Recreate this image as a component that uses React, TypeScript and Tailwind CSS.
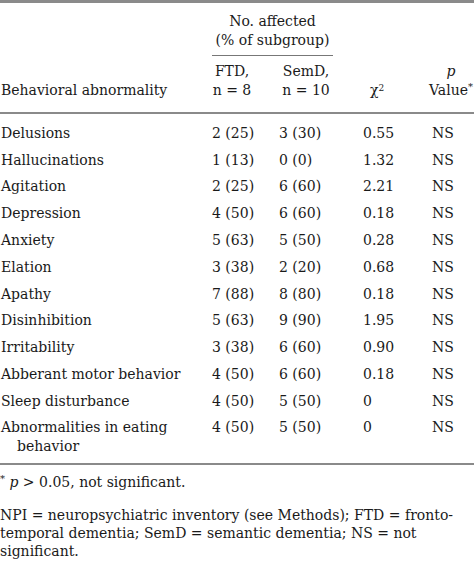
import * as React from "react";

type Row = { label: string; cont?: string; ftd: string; semd: string; chi: string; p: string };

const rows: Row[] = [
  { label: "Delusions", ftd: "2 (25)", semd: "3 (30)", chi: "0.55", p: "NS" },
  { label: "Hallucinations", ftd: "1 (13)", semd: "0 (0)", chi: "1.32", p: "NS" },
  { label: "Agitation", ftd: "2 (25)", semd: "6 (60)", chi: "2.21", p: "NS" },
  { label: "Depression", ftd: "4 (50)", semd: "6 (60)", chi: "0.18", p: "NS" },
  { label: "Anxiety", ftd: "5 (63)", semd: "5 (50)", chi: "0.28", p: "NS" },
  { label: "Elation", ftd: "3 (38)", semd: "2 (20)", chi: "0.68", p: "NS" },
  { label: "Apathy", ftd: "7 (88)", semd: "8 (80)", chi: "0.18", p: "NS" },
  { label: "Disinhibition", ftd: "5 (63)", semd: "9 (90)", chi: "1.95", p: "NS" },
  { label: "Irritability", ftd: "3 (38)", semd: "6 (60)", chi: "0.90", p: "NS" },
  { label: "Abberant motor behavior", ftd: "4 (50)", semd: "6 (60)", chi: "0.18", p: "NS" },
  { label: "Sleep disturbance", ftd: "4 (50)", semd: "5 (50)", chi: "0", p: "NS" },
  { label: "Abnormalities in eating", cont: "behavior", ftd: "4 (50)", semd: "5 (50)", chi: "0", p: "NS" },
];

const cols = "grid grid-cols-[212px_67px_84px_69px_42px]";

export default function App() {
  return (
    <div
      className="w-[474px] h-[561px] bg-white text-[#1a1a1a] text-[14px] overflow-hidden"
      style={{ fontFamily: '"DejaVu Serif", "Liberation Serif", serif' }}
    >
      {/* TABLE HEADER */}
      <div className="border-t-[3px] border-[#8a8a8a]">
        <div className={`${cols} pt-[9px]`}>
          <div />
          <div className="col-span-2 w-[121px] flex flex-col items-center leading-[19px] border-b border-[#777] pb-[5px]">
            <span>No. affected</span>
            <span>(% of subgroup)</span>
          </div>
        </div>
        <div className={`${cols} items-end pt-[6px] pb-[12px] leading-[19px] border-b-2 border-[#8a8a8a]`}>
          <div className="pl-[1px]">Behavioral abnormality</div>
          <div className="w-[40px] flex flex-col items-center">
            <span>FTD,</span>
            <span>n = 8</span>
          </div>
          <div className="w-[54px] flex flex-col items-center">
            <span>SemD,</span>
            <span>n = 10</span>
          </div>
          <div className="pl-[7px]">
            χ<sup className="text-[9px]">2</sup>
          </div>
          <div className="flex flex-col items-center -ml-[3px] pr-[1px]">
            <span className="italic">p</span>
            <span>
              Value<sup className="text-[10px]">*</sup>
            </span>
          </div>
        </div>
      </div>

      {/* TABLE BODY */}
      <div className="pt-[6px] pb-[3px] border-b-2 border-[#8a8a8a]">
        {rows.map((r) => (
          <div key={r.label} className={`${cols} leading-[19px] py-[3.9px]`}>
            <div className="pl-[1px]">
              <div>{r.label}</div>
              {r.cont && <div className="pl-[16px]">{r.cont}</div>}
            </div>
            <div>{r.ftd}</div>
            <div>{r.semd}</div>
            <div>{r.chi}</div>
            <div>{r.p}</div>
          </div>
        ))}
      </div>

      {/* FOOTNOTES */}
      <div className="pt-[8px] leading-[18px]">
        <p>
          <sup className="text-[10px]">*</sup> <span className="italic">p</span> &gt; 0.05, not significant.
        </p>
        <p className="mt-[15px]">
          NPI = neuropsychiatric inventory (see Methods); FTD = fronto-
          <br />
          temporal dementia; SemD = semantic dementia; NS = not
          <br />
          significant.
        </p>
      </div>
    </div>
  );
}
